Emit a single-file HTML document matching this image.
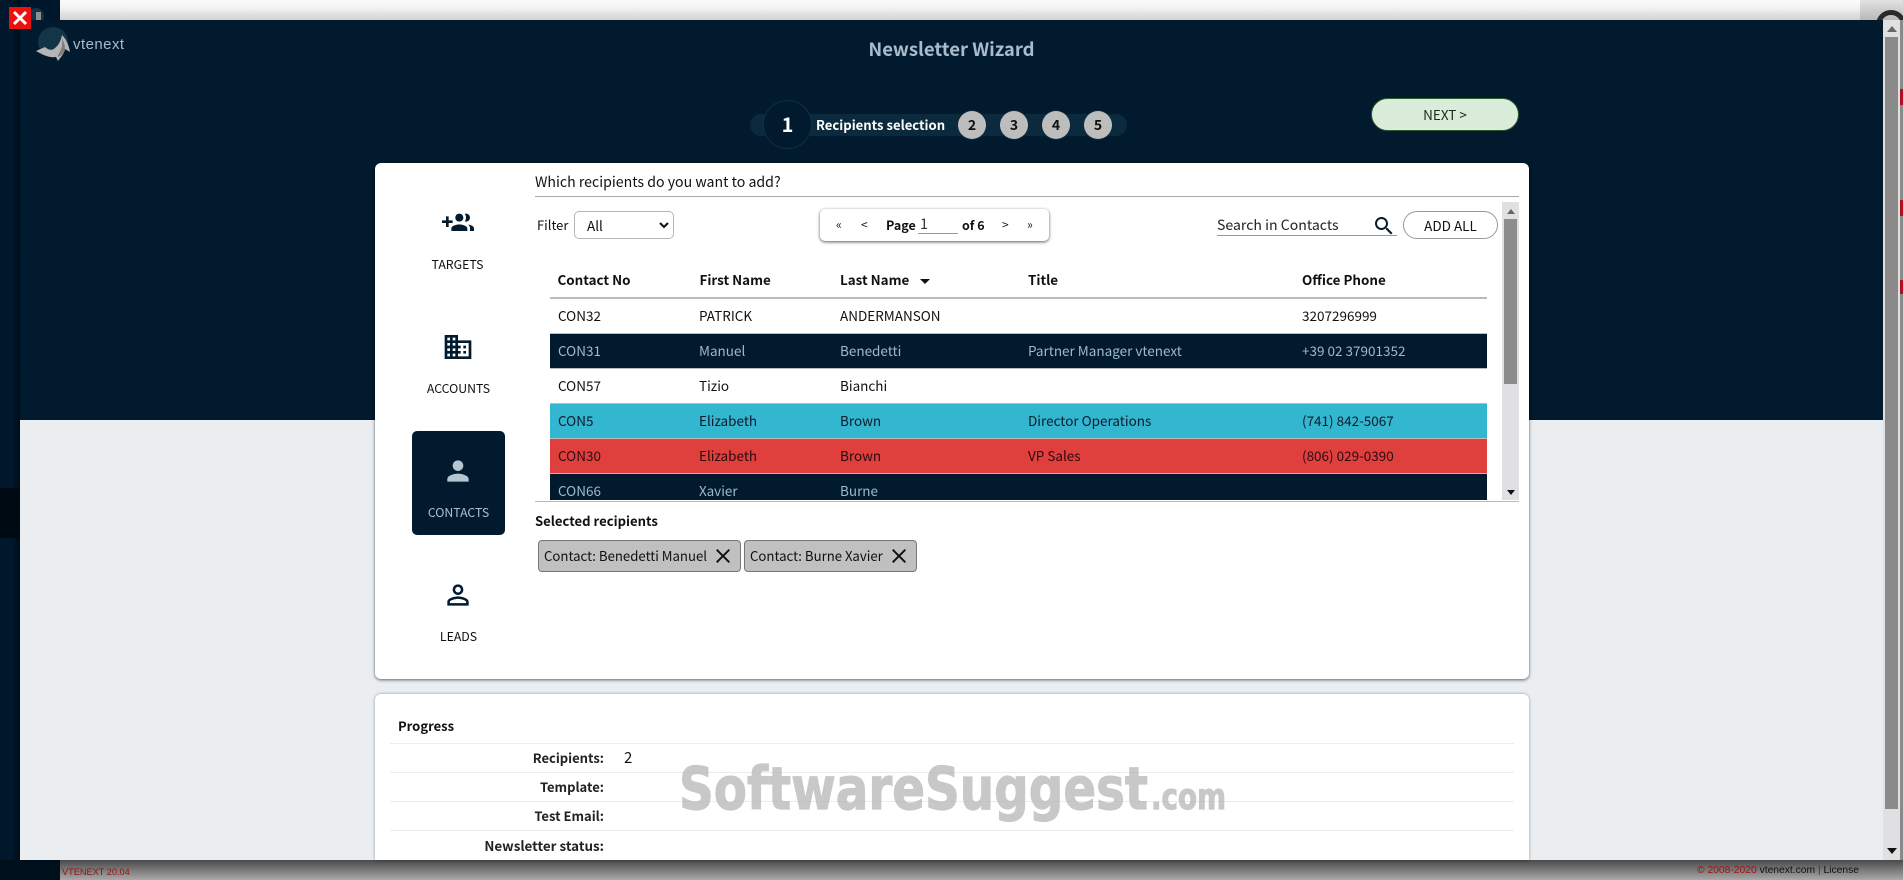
<!DOCTYPE html>
<html><head><meta charset="utf-8"><title>Newsletter Wizard</title>
<style>
html,body{margin:0;padding:0;width:1903px;height:880px;overflow:hidden;background:#00162a}
*{box-sizing:border-box}
body{position:relative;font-family:"Noto Sans CJK JP","Liberation Sans",sans-serif;font-size:13.5px;color:#111}
.a{position:absolute}
.t{position:absolute;white-space:nowrap;line-height:20px;height:20px}
.b{font-weight:700}
svg{position:absolute;display:block}
.line{position:absolute;background:#bbb;height:1px}
.row{position:absolute;left:550px;width:937px;height:34px}
.c{position:absolute;top:6px;white-space:nowrap;line-height:20px}
.c1{left:8px}.c2{left:149px}.c3{left:290px}.c4{left:478px}.c5{left:752px}
.dk{background:#011a2e;color:#9db9cc}
.n{position:absolute;left:412px;width:93px;text-align:center;font-size:12.3px;line-height:20px;white-space:nowrap}
.st{position:absolute;top:111px;width:28px;height:28px;border-radius:50%;background:#bdbdbd;box-shadow:0 0 0 1px #0b2a3d;text-align:center;font-weight:700;font-size:14px;line-height:28px;color:#111}
.chip{position:absolute;top:540px;height:32px;background:#c0c0c0;border:1px solid #777;border-radius:4px}
.pl{position:absolute;left:390px;width:1124px;height:1px;background:#ececec}
.lb{position:absolute;width:214px;left:390px;text-align:right;font-weight:700;font-size:13px;color:#222;line-height:20px;white-space:nowrap}
</style></head><body>
<!-- background strips -->
<div class="a" style="left:60px;top:0;width:1800px;height:20px;background:linear-gradient(#fafafa 0,#f3f3f3 8px,#e6e6e6 12px,#d2d2d2 20px)"></div>
<div class="a" style="left:1860px;top:0;width:43px;height:20px;background:linear-gradient(#e2e2e2,#b8b8b8)"></div>
<div class="a" style="left:1876px;top:10px;width:30px;height:30px;border:5px solid #2a2a2a;border-radius:50%"></div>
<div class="a" style="left:0;top:0;width:20px;height:880px;background:linear-gradient(90deg,#00172c 0,#00172c 12px,#000d18 20px)"></div>
<div class="a" style="left:0;top:488px;width:20px;height:50px;background:#000a12"></div>
<div class="a" style="left:20px;top:0;width:40px;height:20px;background:#00162a;overflow:hidden"><div class="a" style="left:8px;top:8px;width:16px;height:16px;border-radius:50%;background:#143548"></div><div class="a" style="left:16px;top:12px;width:5px;height:8px;background:#8f8f8f"></div></div>
<div class="a" style="left:1900px;top:20px;width:3px;height:860px;background:#8a8a8a"></div>
<div class="a" style="left:1900px;top:89px;width:3px;height:16px;background:#b01020"></div>
<div class="a" style="left:1900px;top:200px;width:3px;height:16px;background:#b01020"></div>
<div class="a" style="left:1900px;top:280px;width:3px;height:14px;background:#b01020"></div>
<!-- bottom -->
<div class="a" style="left:60px;top:860px;width:1843px;height:20px;background:linear-gradient(#4a4a4a,#a9a9a9)"></div>
<div class="a" style="left:0;top:860px;width:60px;height:20px;background:#000f1c"></div>
<div class="t" style="left:62px;top:862px;font:9.2px/20px 'Liberation Sans',sans-serif;color:#a01010">VTENEXT 20.04</div>
<div class="t" style="left:1697px;top:861px;font:10.3px/20px 'Liberation Sans',sans-serif;color:#a01010">© 2008-2020 <span style="color:#111">vtenext.com</span> | <span style="color:#111">License</span></div>

<!-- modal -->
<div class="a" style="left:20px;top:20px;width:1863px;height:840px;background:#eaeef1"></div>
<div class="a" style="left:20px;top:20px;width:1863px;height:400px;background:#011a2e"></div>
<div class="a" style="left:1883px;top:20px;width:17px;height:840px;background:#e0e0e2"></div>
<div class="a" style="left:1885px;top:37px;width:13px;height:772px;background:#8a8a8a"></div>
<div class="a" style="left:1887px;top:26px;width:0;height:0;border:5px solid transparent;border-top:0;border-bottom:6px solid #666"></div>
<div class="a" style="left:1887px;top:848px;width:0;height:0;border:5px solid transparent;border-bottom:0;border-top:6px solid #111"></div>

<!-- close -->
<div class="a" style="left:9px;top:7px;width:22px;height:22px;background:#ee0f0f"></div>
<svg style="left:9px;top:7px" width="22" height="22" viewBox="0 0 22 22"><path d="M5 5L17 17M17 5L5 17" stroke="#fff" stroke-width="3"/></svg>

<!-- logo -->
<svg style="left:34px;top:24px" width="42" height="40" viewBox="0 0 42 40">
<circle cx="19" cy="18" r="15" fill="#143548"/>
<path d="M2 27L11 23C14 26 18 27 21 24C25 21 27 16 28 11C32 15 35 21 36 28L31 25C30 30 27 33 24 37L22 33C15 34 9 31 2 27Z" fill="#b5b5b5"/>
<path d="M24 31C27 27 29 22 28 14C30 18 31 22 31 25C30 29 27 32 24 33Z" fill="#7d7d7d"/>
</svg>
<div class="t" style="left:73px;top:35px;font:15px/20px 'Liberation Sans',sans-serif;letter-spacing:.45px;color:#a8bccb">vtenext</div>

<!-- title -->
<div class="t b" style="left:20px;width:1863px;text-align:center;top:39px;font-size:18.5px;color:#a9bccb">Newsletter Wizard</div>

<!-- stepper -->
<div class="a" style="left:750px;top:114px;width:377px;height:22px;border-radius:11px;background:#0b2a3d"></div>
<div class="a" style="left:763px;top:100px;width:49px;height:49px;border-radius:50%;background:#011a2e;border:1px solid #0f3042;color:#fff;text-align:center;font-size:20px;font-weight:700;line-height:46px">1</div>
<div class="t b" style="left:816px;top:115px;font-size:13.1px;color:#fff">Recipients selection</div>
<div class="st" style="left:958px">2</div><div class="st" style="left:1000px">3</div><div class="st" style="left:1042px">4</div><div class="st" style="left:1084px">5</div>

<!-- next -->
<div class="a" style="left:1371px;top:98px;width:148px;height:33px;border-radius:17px;background:#d9edda;border:1px solid #2e5a2e;text-align:center;line-height:30px;font-size:13.5px;color:#1a2a20">NEXT &gt;</div>

<!-- main card -->
<div class="a" style="left:375px;top:163px;width:1154px;height:516px;background:#fff;border-radius:6px;box-shadow:0 1px 3px rgba(0,0,0,.6)"></div>

<!-- left nav -->
<svg style="left:442px;top:207px" width="32" height="32" viewBox="0 0 24 24" fill="#011a2e"><path d="M8 10H5V7H3v3H0v2h3v3h2v-3h3v-2zm10 1c1.66 0 2.99-1.34 2.99-3S19.66 5 18 5c-.32 0-.63.05-.91.14.57.81.9 1.79.9 2.86s-.34 2.04-.9 2.86c.28.09.59.14.91.14zm-5 0c1.66 0 2.99-1.34 2.99-3S14.66 5 13 5s-3 1.34-3 3 1.34 3 3 3zm6.62 2.16c.83.73 1.38 1.66 1.38 2.84v2h3v-2c0-1.54-2.37-2.49-4.38-2.84zM13 13c-2 0-6 1-6 3v2h12v-2c0-2-4-3-6-3z"/></svg>
<div class="n" style="top:254px;left:411px">TARGETS</div>
<svg style="left:442px;top:331px" width="32" height="32" viewBox="0 0 24 24" fill="#011a2e"><path d="M12 7V3H2v18h20V7H12zM6 19H4v-2h2v2zm0-4H4v-2h2v2zm0-4H4V9h2v2zm0-4H4V5h2v2zm4 12H8v-2h2v2zm0-4H8v-2h2v2zm0-4H8V9h2v2zm0-4H8V5h2v2zm10 12h-8v-2h2v-2h-2v-2h2v-2h-2V9h8v10zm-2-8h-2v2h2v-2zm0 4h-2v2h2v-2z"/></svg>
<div class="n" style="top:378px">ACCOUNTS</div>
<div class="a" style="left:412px;top:431px;width:93px;height:104px;background:#011a2e;border-radius:5px"></div>
<svg style="left:442px;top:455px" width="32" height="32" viewBox="0 0 24 24" fill="#b4c6d2"><path d="M12 12c2.21 0 4-1.79 4-4s-1.79-4-4-4-4 1.79-4 4 1.79 4 4 4zm0 2c-2.67 0-8 1.34-8 4v2h16v-2c0-2.66-5.33-4-8-4z"/></svg>
<div class="n" style="top:502px;color:#a9c0cf">CONTACTS</div>
<svg style="left:442px;top:579px" width="32" height="32" viewBox="0 0 24 24" fill="#011a2e"><path d="M12 5.9c1.16 0 2.1.94 2.1 2.1s-.94 2.1-2.1 2.1S9.9 9.16 9.9 8s.94-2.1 2.1-2.1m0 9c2.97 0 6.1 1.46 6.1 2.1v1.1H5.9V17c0-.64 3.13-2.1 6.1-2.1M12 4C9.79 4 8 5.79 8 8s1.79 4 4 4 4-1.79 4-4-1.79-4-4-4zm0 9c-2.67 0-8 1.34-8 4v3h16v-3c0-2.66-5.33-4-8-4z"/></svg>
<div class="n" style="top:626px">LEADS</div>

<!-- heading -->
<div class="t" style="left:535px;top:172px;font-size:14.15px">Which recipients do you want to add?</div>
<div class="line" style="left:535px;top:196px;width:984px;background:#a8a8a8"></div>

<!-- filter -->
<div class="t" style="left:537px;top:215px;font-size:13px">Filter</div>
<div class="a" style="left:574px;top:211px;width:100px;height:28px;border:1px solid #b5b5b5;border-radius:5px;background:#fff"></div>
<div class="t" style="left:587px;top:215px;font-size:13.5px">All</div>
<svg style="left:659px;top:222px" width="10" height="7" viewBox="0 0 10 7"><path d="M1 1L5 5L9 1" fill="none" stroke="#111" stroke-width="2"/></svg>

<!-- pager -->
<div class="a" style="left:820px;top:209px;width:229px;height:32px;background:#fff;border-radius:5px;box-shadow:0 1px 3px rgba(0,0,0,.65)"></div>
<div class="t" style="left:836px;top:215px;font-size:12px">«</div>
<div class="t" style="left:861px;top:215px;font-size:12px">&lt;</div>
<div class="t b" style="left:886px;top:215px;font-size:12.5px">Page</div>
<div class="t" style="left:920px;top:214px;font-size:14.5px;color:#333">1</div>
<div class="a" style="left:918px;top:233px;width:40px;height:1px;background:#999"></div>
<div class="t b" style="left:962px;top:215px;font-size:12.5px">of 6</div>
<div class="t" style="left:1002px;top:215px;font-size:12px">&gt;</div>
<div class="t" style="left:1027px;top:215px;font-size:12px">»</div>

<!-- search -->
<div class="t" style="left:1217px;top:215px;font-size:14.1px;color:#222">Search in Contacts</div>
<div class="a" style="left:1217px;top:235px;width:180px;height:1px;background:#999"></div>
<svg style="left:1372px;top:214px" width="24" height="24" viewBox="0 0 24 24" fill="#011a2e"><path d="M15.5 14h-.79l-.28-.27C15.41 12.59 16 11.11 16 9.5 16 5.91 13.09 3 9.5 3S3 5.91 3 9.5 5.91 16 9.5 16c1.61 0 3.09-.59 4.23-1.57l.27.28v.79l5 4.99L20.49 19l-4.99-5zm-6 0C7.01 14 5 11.99 5 9.5S7.01 5 9.5 5 14 7.01 14 9.5 11.99 14 9.5 14z"/></svg>
<div class="a" style="left:1403px;top:211px;width:95px;height:28px;border:1px solid #999;border-radius:14px;text-align:center;line-height:26px;font-size:13.5px;background:#fff">ADD ALL</div>

<!-- inner scrollbar -->
<div class="a" style="left:1502px;top:202px;width:17px;height:298px;background:#e0e0e2"></div>
<div class="a" style="left:1504px;top:219px;width:13px;height:165px;background:#8c8c8c"></div>
<div class="a" style="left:1507px;top:209px;width:0;height:0;border:4px solid transparent;border-top:0;border-bottom:5px solid #666"></div>
<div class="a" style="left:1507px;top:490px;width:0;height:0;border:4px solid transparent;border-bottom:0;border-top:5px solid #111"></div>

<!-- table header -->
<div class="t b" style="left:557.5px;top:269px;font-size:13.4px">Contact No</div>
<div class="t b" style="left:699.5px;top:269px;font-size:13.4px">First Name</div>
<div class="t b" style="left:840px;top:269px;font-size:13.4px">Last Name</div>
<div class="a" style="left:920px;top:279px;width:0;height:0;border:5px solid transparent;border-bottom:0;border-top:5px solid #111"></div>
<div class="t b" style="left:1028px;top:269px;font-size:13.4px">Title</div>
<div class="t b" style="left:1302px;top:269px;font-size:13.4px">Office Phone</div>
<div class="line" style="left:550px;top:297px;width:937px;height:2px;background:#bbb"></div>

<!-- rows -->
<div class="row" style="top:299px"><span class="c c1">CON32</span><span class="c c2">PATRICK</span><span class="c c3">ANDERMANSON</span><span class="c c5">3207296999</span></div>
<div class="row dk" style="top:334px"><span class="c c1">CON31</span><span class="c c2">Manuel</span><span class="c c3">Benedetti</span><span class="c c4">Partner Manager vtenext</span><span class="c c5">+39 02 37901352</span></div>
<div class="row" style="top:369px"><span class="c c1">CON57</span><span class="c c2">Tizio</span><span class="c c3">Bianchi</span></div>
<div class="row" style="top:404px;background:#33b6d0;color:#0c1c2a"><span class="c c1">CON5</span><span class="c c2">Elizabeth</span><span class="c c3">Brown</span><span class="c c4">Director Operations</span><span class="c c5">(741) 842-5067</span></div>
<div class="row" style="top:439px;background:#df3f3d;color:#2a0c10"><span class="c c1">CON30</span><span class="c c2">Elizabeth</span><span class="c c3">Brown</span><span class="c c4">VP Sales</span><span class="c c5">(806) 029-0390</span></div>
<div class="row dk" style="top:474px;height:26px;overflow:hidden"><span class="c c1">CON66</span><span class="c c2">Xavier</span><span class="c c3">Burne</span></div>
<div class="line" style="left:550px;top:333px;width:937px"></div>
<div class="line" style="left:550px;top:368px;width:937px"></div>
<div class="line" style="left:550px;top:403px;width:937px"></div>
<div class="line" style="left:550px;top:438px;width:937px"></div>
<div class="line" style="left:550px;top:473px;width:937px"></div>
<div class="line" style="left:535px;top:501px;width:984px"></div>

<!-- selected -->
<div class="t b" style="left:535px;top:511px;font-size:13.1px">Selected recipients</div>
<div class="chip" style="left:538px;width:203px"></div>
<div class="t" style="left:544px;top:546px;font-size:13.2px">Contact: Benedetti Manuel</div>
<svg style="left:711px;top:544px" width="24" height="24" viewBox="0 0 24 24" fill="#111"><path d="M19 6.41L17.59 5 12 10.59 6.41 5 5 6.41 10.59 12 5 17.59 6.41 19 12 13.41 17.59 19 19 17.59 13.41 12z"/></svg>
<div class="chip" style="left:744px;width:173px"></div>
<div class="t" style="left:750px;top:546px;font-size:13.2px">Contact: Burne Xavier</div>
<svg style="left:887px;top:544px" width="24" height="24" viewBox="0 0 24 24" fill="#111"><path d="M19 6.41L17.59 5 12 10.59 6.41 5 5 6.41 10.59 12 5 17.59 6.41 19 12 13.41 17.59 19 19 17.59 13.41 12z"/></svg>

<!-- progress card -->
<div class="a" style="left:375px;top:694px;width:1154px;height:166px;background:#fff;border-radius:6px 6px 0 0;box-shadow:0 0 3px rgba(0,0,0,.35)"></div>
<div class="t b" style="left:398px;top:716px;font-size:13px">Progress</div>
<div class="pl" style="top:743px"></div><div class="pl" style="top:772px"></div><div class="pl" style="top:801px"></div><div class="pl" style="top:830px"></div>
<div class="lb" style="top:748px">Recipients:</div>
<div class="t" style="left:624px;top:748px;font-size:15px">2</div>
<div class="lb" style="top:777px">Template:</div>
<div class="lb" style="top:806px">Test Email:</div>
<div class="lb" style="top:835px;font-size:13.4px">Newsletter status:</div>

<!-- watermark -->
<svg style="left:670px;top:750px" width="570" height="80" viewBox="0 0 570 80">
<g opacity=".72" fill="#b4b4b4" stroke="#b4b4b4" stroke-width="1.2" font-family="DejaVu Sans,sans-serif" font-weight="700">
<text x="9" y="59" font-size="59" textLength="469" lengthAdjust="spacingAndGlyphs">SoftwareSuggest</text>
<text x="481" y="59" font-size="36" textLength="75" lengthAdjust="spacingAndGlyphs">.com</text>
</g>
</svg>
</body></html>
